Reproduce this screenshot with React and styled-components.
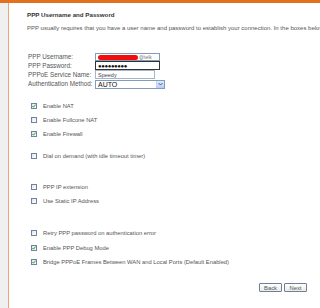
import styled, { createGlobalStyle } from "styled-components";

const Global = createGlobalStyle`
  html, body {
    margin: 0;
    padding: 0;
    width: 320px;
    height: 308px;
    overflow: hidden;
    background: #ffffff;
    font-family: "Liberation Sans", Arial, sans-serif;
  }
`;

const Page = styled.div`
  display: flex;
  flex-direction: column;
  width: 320px;
  height: 308px;
`;

const TopBar = styled.div`
  height: 3px;
  background-color: #e2711d;
  flex-shrink: 0;
`;

const Body = styled.div`
  display: flex;
  flex: 1;
`;

const Sidebar = styled.div`
  width: 8px;
  background-color: #f0f0f0;
  border-right: 1px solid #eca47b;
  flex-shrink: 0;
`;

const Content = styled.div`
  flex: 1;
  min-width: 0;
  padding-left: 18px;
  font-size: 6px;
  color: #555;
  white-space: nowrap;
  overflow: hidden;
`;

const Title = styled.div`
  height: 8px;
  line-height: 8px;
  margin-top: 8px;
  font-weight: bold;
  font-size: 6.2px;
  color: #333;
`;

const Intro = styled.div`
  height: 8px;
  line-height: 8px;
  margin-top: 5px;
  font-size: 6px;
`;

const Form = styled.div`
  display: grid;
  grid-template-columns: 68px auto;
  grid-template-rows: 8px 9px 9px 10px;
  margin-top: 21px;
  align-items: center;
`;

const Label = styled.div`
  font-size: 6.3px;
  line-height: 8px;
  padding-left: 1px;
`;

const TextBox = styled.div`
  box-sizing: border-box;
  height: ${(p) => p.h || 8}px;
  width: ${(p) => p.w}px;
  border: 1px solid ${(p) => p.border || "#7f9db9"};
  background: #fff;
  display: flex;
  align-items: center;
  padding-left: 2px;
  font-size: 5.5px;
  color: #444;
  overflow: hidden;
`;

const Redacted = styled.span`
  display: inline-block;
  width: 40px;
  height: 5px;
  border-radius: 3px;
  background: #f00d0d;
  margin-right: 1px;
`;

const Suffix = styled.span`
  font-size: 5px;
  color: #777;
`;

const Dots = styled.span`
  font-size: 6px;
  letter-spacing: -0.4px;
  color: #111;
`;

const Select = styled.div`
  box-sizing: border-box;
  height: 9px;
  width: 70px;
  border: 1px solid #7f9db9;
  display: flex;
  align-items: center;
  justify-content: space-between;
  padding-left: 2px;
  font-size: 7px;
  color: #111;
`;

const SelectButton = styled.div`
  width: 7px;
  height: 7px;
  background: linear-gradient(#e2ebfd, #b6cdf8);
  border-left: 1px solid #c3d3fd;
  display: flex;
  align-items: center;
  justify-content: center;
`;

const Options = styled.div`
  display: flex;
  flex-direction: column;
`;

const CheckRow = styled.div`
  display: flex;
  align-items: center;
  height: 14px;
  margin-top: ${(p) => p.mt || 0}px;
  padding-left: 4px;
  gap: 6px;
  font-size: 5.8px;
`;

const Box = styled.span`
  box-sizing: border-box;
  width: 6px;
  height: 6px;
  border: 1px solid #6d82a8;
  background: linear-gradient(135deg, #e4e4de, #ffffff);
  display: flex;
  align-items: center;
  justify-content: center;
`;

const Buttons = styled.div`
  display: flex;
  justify-content: flex-end;
  gap: 2px;
  padding-right: 13px;
  margin-top: 14px;
`;

const Button = styled.div`
  box-sizing: border-box;
  width: ${(p) => p.w}px;
  height: 9px;
  border: 1px solid #6e7f97;
  border-radius: 1px;
  background: linear-gradient(#ffffff, #ecebe6);
  font-size: 5.8px;
  color: #555;
  display: flex;
  align-items: center;
  justify-content: center;
`;

const Check = () => (
  <svg width="4" height="4" viewBox="0 0 4 4">
    <path d="M0.4 2 L1.5 3.2 L3.6 0.6" stroke="#21a121" strokeWidth="1" fill="none" />
  </svg>
);

const options = [
  { label: "Enable NAT", checked: true, mt: 10 },
  { label: "Enable Fullcone NAT", checked: false },
  { label: "Enable Firewall", checked: true },
  { label: "Dial on demand (with idle timeout timer)", checked: false, mt: 8 },
  { label: "PPP IP extension", checked: false, mt: 17 },
  { label: "Use Static IP Address", checked: false },
  { label: "Retry PPP password on authentication error", checked: false, mt: 18 },
  { label: "Enable PPP Debug Mode", checked: true, mt: 1 },
  { label: "Bridge PPPoE Frames Between WAN and Local Ports (Default Enabled)", checked: true },
];

const App = () => {
  return (
    <Page>
      <Global />
      <TopBar />
      <Body>
        <Sidebar />
        <Content>
          <Title>PPP Username and Password</Title>
          <Intro>
            PPP usually requires that you have a user name and password to establish your connection. In the boxes below
          </Intro>
          <Form>
            <Label>PPP Username:</Label>
            <TextBox w={65}>
              <Redacted />
              <Suffix>@telk</Suffix>
            </TextBox>
            <Label>PPP Password:</Label>
            <TextBox w={65} h={9} border="#333">
              <Dots>●●●●●●●●●</Dots>
            </TextBox>
            <Label>PPPoE Service Name:</Label>
            <TextBox w={60} h={9} border="#a5b5cc">
              Speedy
            </TextBox>
            <Label>Authentication Method:</Label>
            <Select>
              AUTO
              <SelectButton>
                <svg width="5" height="4" viewBox="0 0 5 4">
                  <path d="M0.5 1 L2.5 3 L4.5 1" stroke="#4d6185" strokeWidth="1" fill="none" />
                </svg>
              </SelectButton>
            </Select>
          </Form>
          <Options>
            {options.map((o) => (
              <CheckRow key={o.label} mt={o.mt}>
                <Box>{o.checked && <Check />}</Box>
                {o.label}
              </CheckRow>
            ))}
          </Options>
          <Buttons>
            <Button w={23}>Back</Button>
            <Button w={23}>Next</Button>
          </Buttons>
        </Content>
      </Body>
    </Page>
  );
};

export default App;
